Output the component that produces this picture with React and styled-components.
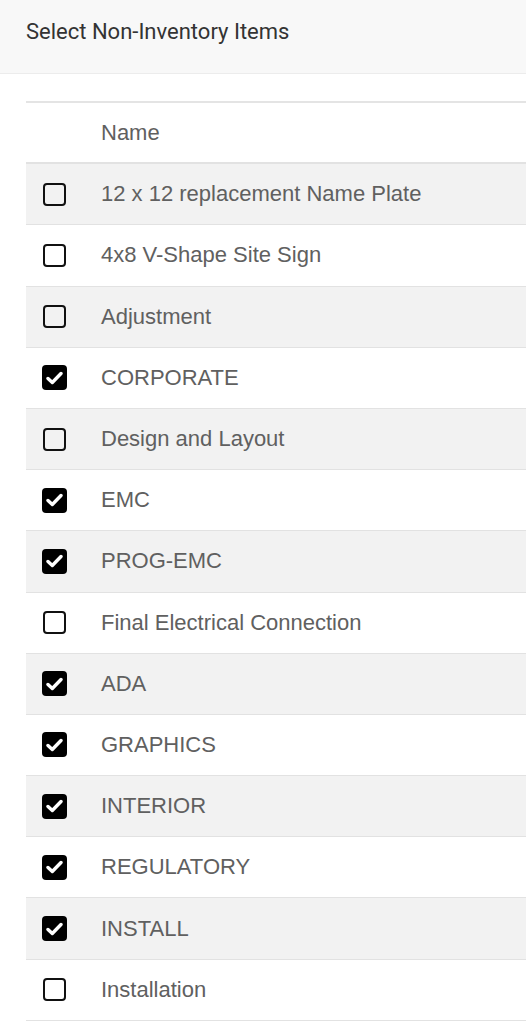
import React from 'react';
import styled, { createGlobalStyle } from 'styled-components';

const GlobalStyle = createGlobalStyle`
  body {
    margin: 0;
    background: #ffffff;
    font-family: "Liberation Sans", Arial, sans-serif;
  }
`;

const Header = styled.div`
  height: 74px;
  box-sizing: border-box;
  padding: 19px 26px 0;
  background: #f8f8f8;
  border-bottom: 1px solid #ececec;
  font-family: Roboto, "Liberation Sans", sans-serif;
  font-size: 22px;
  color: #333333;
`;

const Body = styled.div`
  padding: 27px 0 0 26px;
  overflow: hidden;
`;

const Table = styled.div`
  width: 520px;
  border-top: 2px solid #e4e4e4;
`;

const Row = styled.div`
  display: flex;
  align-items: center;
  height: 61.2px;
  box-sizing: border-box;
  border-bottom: ${(p) => (p.$head ? '2px' : '1px')} solid #e2e2e2;
  background: ${(p) => (p.$shade ? '#f2f2f2' : '#ffffff')};
  color: #606060;
  font-size: 22px;
`;

const CheckCell = styled.div`
  width: 75px;
  display: flex;
  justify-content: flex-end;
  padding-right: 35px;
  box-sizing: border-box;
`;

const Box = styled.span`
  width: ${(p) => (p.$on ? '25px' : '23px')};
  height: ${(p) => (p.$on ? '25px' : '23px')};
  margin-right: ${(p) => (p.$on ? '-1px' : '0')};
  box-sizing: border-box;
  border-radius: 4px;
  border: ${(p) => (p.$on ? 'none' : '2px solid #111')};
  background: ${(p) => (p.$on ? '#000' : 'transparent')};
  display: flex;
  align-items: center;
  justify-content: center;
`;

const Label = styled.span`
  flex: 1;
`;

const items = [
  ['12 x 12 replacement Name Plate', false],
  ['4x8 V-Shape Site Sign', false],
  ['Adjustment', false],
  ['CORPORATE', true],
  ['Design and Layout', false],
  ['EMC', true],
  ['PROG-EMC', true],
  ['Final Electrical Connection', false],
  ['ADA', true],
  ['GRAPHICS', true],
  ['INTERIOR', true],
  ['REGULATORY', true],
  ['INSTALL', true],
  ['Installation', false],
];

function Check({ on }) {
  return (
    <Box $on={on}>
      {on && (
        <svg width="17" height="14" viewBox="0 0 17 14">
          <path d="M2 7.5 L6.3 11.5 L15 2.5" fill="none" stroke="#fff" strokeWidth="3.4" strokeLinecap="round" strokeLinejoin="round" />
        </svg>
      )}
    </Box>
  );
}

export default function App() {
  return (
    <>
      <GlobalStyle />
      <Header>Select Non-Inventory Items</Header>
      <Body>
        <Table>
          <Row $head>
            <CheckCell />
            <Label>Name</Label>
          </Row>
          {items.map(([name, on], i) => (
            <Row key={name} $shade={i % 2 === 0}>
              <CheckCell>
                <Check on={on} />
              </CheckCell>
              <Label>{name}</Label>
            </Row>
          ))}
        </Table>
      </Body>
    </>
  );
}
